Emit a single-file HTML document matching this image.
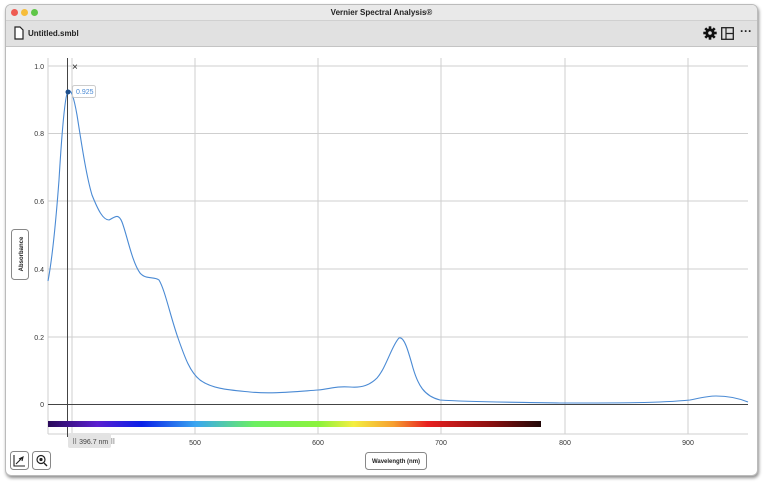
<!DOCTYPE html>
<html><head><meta charset="utf-8"><style>
body{margin:0;width:768px;height:485px;background:#fff;font-family:"Liberation Sans",sans-serif;position:relative;overflow:hidden}
.win{position:absolute;left:5px;top:4px;width:751px;height:470px;border:1px solid #bbb;border-radius:6px;box-shadow:1px 2px 3px rgba(0,0,0,.45);overflow:hidden;background:#fff}
.title{height:15px;background:#e9e9e9;text-align:center;font-size:8px;font-weight:bold;line-height:15px;color:#222}
.dot{position:absolute;top:4px;width:7px;height:7px;border-radius:50%}
.tb{height:25px;background:#e1e1e1;border-top:1px solid #d0d0d0;border-bottom:1px solid #c4c4c4;position:relative}
</style></head><body>
<div class="win">
<div class="title">Vernier Spectral Analysis®</div>
<div class="dot" style="left:5px;background:#ee5b52"></div>
<div class="dot" style="left:15px;background:#f6bd3b"></div>
<div class="dot" style="left:25px;background:#5fc648"></div>
<div class="tb">
<svg style="position:absolute;left:8px;top:5px" width="10" height="14"><path d="M1 1h5l3 3v9H1z" fill="#fff" stroke="#222" stroke-width="1.2"/></svg>
<span style="position:absolute;left:22px;top:8px;font-size:8px;font-weight:bold;color:#222">Untitled.smbl</span>
<svg style="position:absolute;left:697px;top:5px" width="14" height="14" viewBox="-7 -7 14 14"><g fill="#111"><circle r="4.6"/><g id="t"><rect x="-1.3" y="-6.7" width="2.6" height="3"/><rect x="-1.3" y="3.7" width="2.6" height="3"/></g><use href="#t" transform="rotate(45)"/><use href="#t" transform="rotate(90)"/><use href="#t" transform="rotate(135)"/></g><circle r="1.8" fill="#e1e1e1"/></svg>
<svg style="position:absolute;left:715px;top:6px" width="13" height="13"><rect x="0.7" y="0.7" width="11.6" height="11.6" fill="none" stroke="#222" stroke-width="1.3"/><path d="M5 1v11M5 6.5h7" stroke="#222" stroke-width="1.2"/></svg>
<span style="position:absolute;left:734px;top:3px;font-size:12px;font-weight:bold;color:#222">···</span>
</div>
</div>
<svg style="position:absolute;left:0;top:0" width="768" height="485" font-family="Liberation Sans" font-size="7" fill="#333">
<g stroke="#cfcfcf" stroke-width="1">
<path d="M72 58V434M195 58V434M318 58V434M441 58V434M565 58V434M688 58V434"/>
<path d="M48 66H748M48 133.5H748M48 201H748M48 269H748M48 337H748"/>
<path d="M48 58V434M48 434H748"/>
</g>
<path d="M48 404.5H748" stroke="#444" stroke-width="1"/>
<path d="M67.5 58V437" stroke="#444" stroke-width="1"/>
<defs><linearGradient id="sp" x1="0" x2="1"><stop offset="0" stop-color="#2a0a5a"/><stop offset=".1" stop-color="#5b1fd0"/><stop offset=".19" stop-color="#0a20e8"/><stop offset=".3" stop-color="#3aa6f0"/><stop offset=".42" stop-color="#6cf060"/><stop offset=".55" stop-color="#8cf23c"/><stop offset=".62" stop-color="#f4ef40"/><stop offset=".7" stop-color="#f6a030"/><stop offset=".77" stop-color="#e82020"/><stop offset=".9" stop-color="#8a1010"/><stop offset="1" stop-color="#200808"/></linearGradient></defs>
<rect x="48" y="421" width="493" height="6" fill="url(#sp)"/>
<path fill="none" stroke="#4a8ad4" stroke-width="1.1" d="M48 281 C52 260,56 220,59 180 C62 130,65 95,68 91 C71 88,74 98,77 115 C81 140,86 175,92 195 C98 210,103 220,109 220 C114 218,118 212,122 222 C127 235,132 262,140 273 C146 280,154 276,159 280 C165 290,170 315,178 338 C185 358,190 372,200 380 C212 389,230 390,250 392 C270 394,290 392,318 390 C330 389,335 386,350 387 C362 388,370 385,377 378 C386 368,392 345,399 338 C404 336,408 350,413 368 C418 385,424 396,440 400 C470 402,500 402,560 403 C620 403,660 403,690 400 C700 398,708 396,716 396 C728 396,738 398,748 402"/>
<circle cx="68" cy="92" r="2.5" fill="#1d4e8c"/>
<rect x="72.5" y="85.5" width="23" height="12" rx="2" fill="#fff" stroke="#ccc"/>
<text x="76" y="94" fill="#4a8ad4">0.925</text>
<text x="72" y="70" font-size="10" fill="#222">×</text>
<g text-anchor="end"><text x="44" y="69">1.0</text><text x="44" y="136">0.8</text><text x="44" y="204">0.6</text><text x="44" y="272">0.4</text><text x="44" y="340">0.2</text><text x="44" y="407">0</text></g>
<g text-anchor="middle"><text x="195" y="445">500</text><text x="318" y="445">600</text><text x="441" y="445">700</text><text x="565" y="445">800</text><text x="688" y="445">900</text></g>
<rect x="68" y="433" width="43" height="15" rx="2" fill="#e3e3e3"/>
<text x="72" y="444" fill="#444">⠿ 396.7 nm ⠿</text>
<rect x="11.5" y="229.5" width="17" height="50" rx="3" fill="#fff" stroke="#888"/>
<text transform="translate(23,254) rotate(-90)" text-anchor="middle" font-size="6" font-weight="bold" fill="#222">Absorbance</text>
<rect x="365.5" y="452.5" width="61" height="17" rx="3" fill="#fff" stroke="#888"/>
<text x="396" y="463" text-anchor="middle" font-size="6" font-weight="bold" fill="#222">Wavelength (nm)</text>
<rect x="10.5" y="451.5" width="18" height="18" rx="3" fill="#fff" stroke="#888"/>
<path d="M14 455V466H25M16 464l7-7M19 459l4-2-1 4" fill="none" stroke="#222" stroke-width="1.1"/>
<rect x="32.5" y="451.5" width="18" height="18" rx="3" fill="#fff" stroke="#888"/>
<circle cx="41" cy="459.5" r="4" fill="none" stroke="#222" stroke-width="1.2"/><circle cx="41" cy="459.5" r="1.6" fill="#222"/><path d="M44 463l3 3" stroke="#222" stroke-width="1.4"/>
</svg>
</body></html>
